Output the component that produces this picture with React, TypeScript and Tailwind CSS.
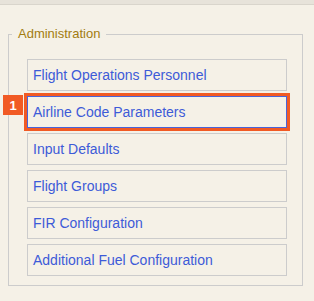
const items = [
  "Flight Operations Personnel",
  "Airline Code Parameters",
  "Input Defaults",
  "Flight Groups",
  "FIR Configuration",
  "Additional Fuel Configuration",
];

export default function App() {
  return (
    <div
      className="h-[301px] w-[314px] overflow-hidden bg-[#f5f1e7]"
      style={{ fontFamily: '"Liberation Sans", Arial, sans-serif' }}
    >
      <div className="h-[5px] border-b border-[#d9d5cc] bg-[#e7e3da]" />
      <fieldset className="ml-[8px] mt-[21px] w-[295px] border border-[#cccccc] pb-[9px] pt-[17px]">
        <legend className="ml-[3px] px-[6px] text-[13px] leading-[16px] text-[#a27c10]">
          Administration
        </legend>
        <div className="flex flex-col gap-[5px] pl-[18px]">
          {items.map((label, i) => {
            const active = i === 1;
            return (
              <div
                key={label}
                className={
                  active
                    ? "relative flex h-[32px] w-[260px] items-center border border-[#4a63d8] pl-[5px] text-[14px] text-[#3d5bd8] outline-[3px] outline-[#f15a24] outline-solid"
                    : "relative flex h-[32px] w-[260px] items-center border border-[#cccccc] pl-[5px] text-[14px] text-[#3d5bd8]"
                }
              >
                {label}
                {active ? (
                  <span className="absolute left-[-25px] top-[-2px] flex h-[20px] w-[20px] items-center justify-center bg-[#f15a24] text-[13px] font-bold leading-none text-white">
                    1
                  </span>
                ) : null}
              </div>
            );
          })}
        </div>
      </fieldset>
    </div>
  );
}
